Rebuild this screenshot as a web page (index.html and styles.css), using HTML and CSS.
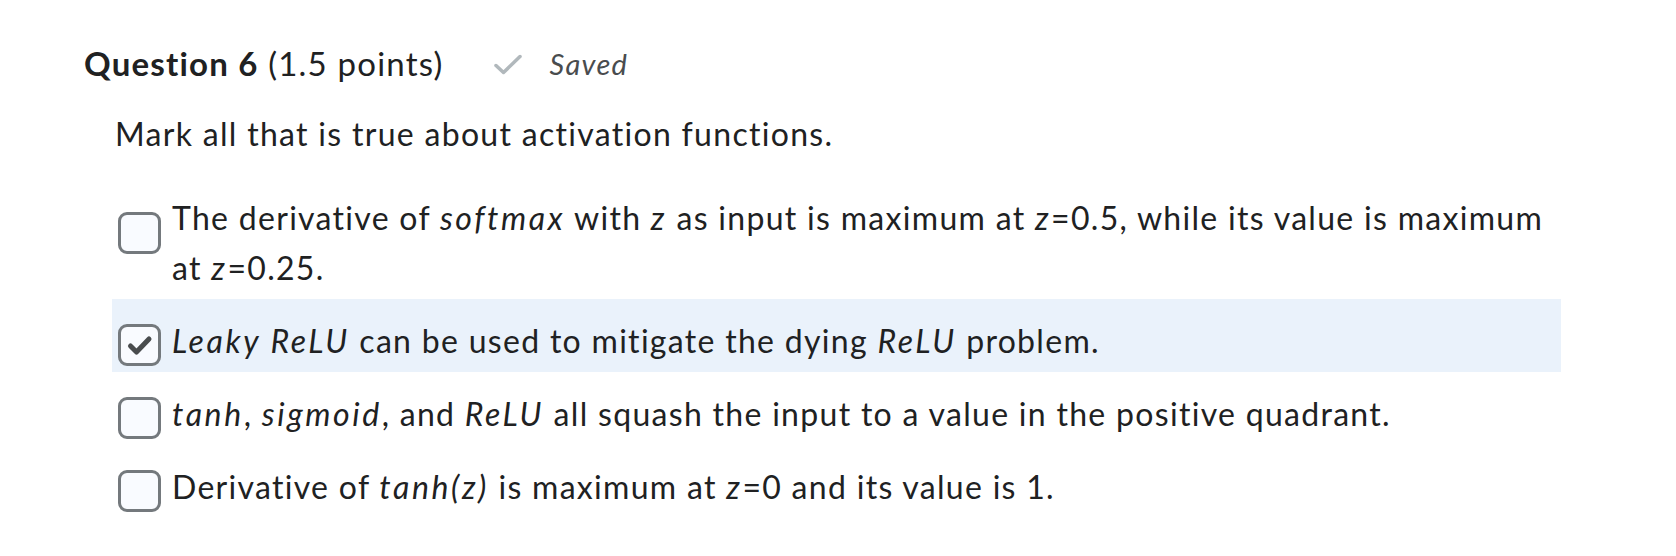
FILE: index.html
```html
<!DOCTYPE html>
<html lang="en">
<head>
  <meta charset="UTF-8">
  <meta name="viewport" content="width=device-width, initial-scale=1.0">
  <title>Question 6</title>
  <link rel="stylesheet" href="styles.css">
</head>
<body>
  <div class="question">
    <div class="question-header">
      <h2 class="question-title"><strong>Question 6</strong> (1.5 points)</h2>
      <span class="save-status">
        <svg class="save-check" width="30" height="23" viewBox="0 0 30 23" aria-hidden="true">
          <path d="M3 12.5 L10.5 19.5 L27 3.5" fill="none" stroke="#b1b8bc" stroke-width="3.5" stroke-linecap="round" stroke-linejoin="round"/>
        </svg>
        <em>Saved</em>
      </span>
    </div>

    <p class="prompt">Mark all that is true about activation functions.</p>

    <ul class="options">
      <li class="option option-multiline">
        <span class="checkbox"></span>
        <span class="option-text">The derivative of <em>softmax</em> with <em>z</em> as input is maximum at <em>z</em>=0.5, while its value is maximum at <em>z</em>=0.25.</span>
      </li>
      <li class="option selected">
        <span class="checkbox checked">
          <svg width="28" height="24" viewBox="0 0 28 24" aria-hidden="true">
            <path d="M4.5 13 L10.5 19 L23 6" fill="none" stroke="#494c4e" stroke-width="5" stroke-linecap="round" stroke-linejoin="round"/>
          </svg>
        </span>
        <span class="option-text"><em>Leaky ReLU</em> can be used to mitigate the dying <em>ReLU</em> problem.</span>
      </li>
      <li class="option">
        <span class="checkbox"></span>
        <span class="option-text"><em>tanh</em>, <em>sigmoid</em>, and <em>ReLU</em> all squash the input to a value in the positive quadrant.</span>
      </li>
      <li class="option">
        <span class="checkbox"></span>
        <span class="option-text">Derivative of <em>tanh(z)</em> is maximum at <em>z</em>=0 and its value is 1.</span>
      </li>
    </ul>
  </div>
</body>
</html>
```

FILE: styles.css
```css
body {
  margin: 0;
  font-family: Lato, "Open Sans", sans-serif;
  color: #202122;
  background-color: white;
}
.question {
  padding: 41px 0 0 84px;
  letter-spacing: 1.3px;
  font-variant-ligatures: none;
}
.question-header {
  display: flex;
  align-items: center;
  gap: 50px;
  height: 45px;
}
.question-title {
  margin: 0;
  font-size: 33px;
  font-weight: normal;
  line-height: 45px;
  letter-spacing: 1.2px;
}
.question-title strong {
  font-weight: bold;
}
.save-status {
  display: flex;
  align-items: center;
  gap: 26px;
  font-size: 29px;
  color: #494c4e;
}
.save-check {
  margin-top: 2px;
}
.prompt {
  margin: 23px 0 0 31px;
  font-size: 32px;
  line-height: 50px;
}
.options {
  list-style: none;
  margin: 17px 0 0 28px;
  padding: 0;
  width: 1449px;
}
.option {
  display: flex;
  align-items: flex-start;
  gap: 11px;
  padding: 17px 6px 6px 6px;
  font-size: 32px;
  line-height: 50px;
}
.option em {
  letter-spacing: 2.6px;
}
.option.selected {
  background-color: #eaf2fb;
}
.checkbox {
  flex: 0 0 auto;
  box-sizing: border-box;
  width: 43px;
  height: 42px;
  margin-top: 8px;
  border: 3px solid #74797d;
  border-radius: 9px;
  background-color: #f9fbff;
  display: flex;
  align-items: center;
  justify-content: center;
}
.option-multiline .checkbox {
  margin-top: 19px;
}
```
